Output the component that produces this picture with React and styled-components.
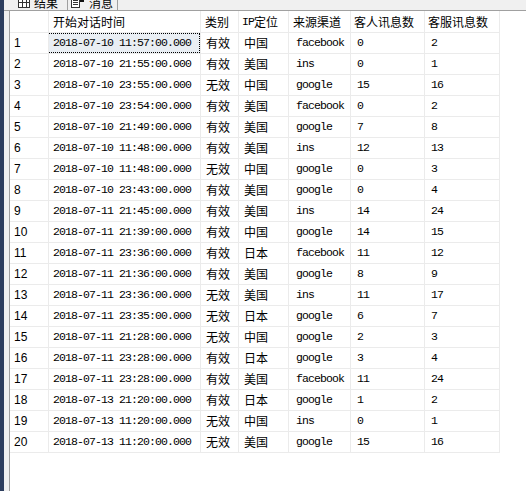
import styled, { createGlobalStyle } from "styled-components";

const GlobalStyle = createGlobalStyle`
  html, body {
    margin: 0;
    padding: 0;
    background: #ffffff;
    overflow: hidden;
  }
`;

const rows = [
  [1, "2018-07-10 11:57:00.000", "有效", "中国", "facebook", 0, 2],
  [2, "2018-07-10 21:55:00.000", "有效", "美国", "ins", 0, 1],
  [3, "2018-07-10 23:55:00.000", "无效", "中国", "google", 15, 16],
  [4, "2018-07-10 23:54:00.000", "有效", "美国", "facebook", 0, 2],
  [5, "2018-07-10 21:49:00.000", "有效", "美国", "google", 7, 8],
  [6, "2018-07-10 11:48:00.000", "有效", "美国", "ins", 12, 13],
  [7, "2018-07-10 11:48:00.000", "无效", "中国", "google", 0, 3],
  [8, "2018-07-10 23:43:00.000", "有效", "美国", "google", 0, 4],
  [9, "2018-07-11 21:45:00.000", "有效", "美国", "ins", 14, 24],
  [10, "2018-07-11 21:39:00.000", "有效", "中国", "google", 14, 15],
  [11, "2018-07-11 23:36:00.000", "有效", "日本", "facebook", 11, 12],
  [12, "2018-07-11 21:36:00.000", "有效", "美国", "google", 8, 9],
  [13, "2018-07-11 23:36:00.000", "无效", "美国", "ins", 11, 17],
  [14, "2018-07-11 23:35:00.000", "无效", "日本", "google", 6, 7],
  [15, "2018-07-11 21:28:00.000", "无效", "中国", "google", 2, 3],
  [16, "2018-07-11 23:28:00.000", "有效", "日本", "google", 3, 4],
  [17, "2018-07-11 23:28:00.000", "有效", "美国", "facebook", 11, 24],
  [18, "2018-07-13 21:20:00.000", "有效", "日本", "google", 1, 2],
  [19, "2018-07-13 11:20:00.000", "无效", "中国", "ins", 0, 1],
  [20, "2018-07-13 11:20:00.000", "无效", "美国", "google", 15, 16],
];

const Window = styled.div`
  display: flex;
  width: 526px;
  height: 491px;
`;

const SideStrip = styled.div`
  width: 4px;
  background: #2d3e5e;
`;

const Main = styled.div`
  flex: 1;
  display: flex;
  flex-direction: column;
  background: #f0f0f0;
`;

const TabBar = styled.div`
  height: 10px;
  display: flex;
  align-items: flex-end;
  overflow: hidden;
  padding-left: 9px;
  border-bottom: 1px solid #a0a0a0;
`;

const Tab = styled.div`
  height: 20px;
  flex-shrink: 0;
  display: flex;
  align-items: flex-end;
  gap: 4px;
  padding: 0 ${(p) => p.$padRight}px 0 ${(p) => p.$padLeft}px;
  border-right: 1px solid #a0a0a0;
  font-family: "Noto Sans CJK SC", sans-serif;
  font-size: 12px;
  line-height: 14px;
  color: #000;
  box-sizing: border-box;
`;

const TabIcon = styled.svg`
  display: block;
  margin-bottom: 2px;
`;

const GridArea = styled.div`
  flex: 1;
  margin-left: 5px;
  background: #ffffff;
  border-left: 1px solid #a0a0a0;
`;

const Grid = styled.div`
  display: grid;
  grid-template-columns: 39px 152px 38px 50px 62px 74px 75px;
  width: 490px;
`;

const Cell = styled.div`
  position: relative;
  box-sizing: border-box;
  height: ${(p) => (p.$head ? 22 : 21)}px;
  display: flex;
  align-items: center;
  padding-left: ${(p) => p.$pad ?? 4}px;
  border-right: 1px solid #ebebeb;
  border-bottom: 1px solid #ebebeb;
  background: ${(p) => (p.$selected ? "#e9eef3" : "#ffffff")};
  color: #000;
  white-space: nowrap;
  overflow: hidden;

  &::after {
    content: ${(p) => (p.$selected ? '""' : "none")};
    position: absolute;
    top: 0;
    left: -1px;
    right: 0;
    bottom: 0;
    border: 1px dotted #000;
  }
`;

const Cjk = styled.span`
  font-family: "Noto Sans CJK SC", sans-serif;
  font-size: 12px;
  line-height: 14px;
`;

const Mono = styled.span`
  font-family: "Liberation Mono", monospace;
  font-size: 11.5px;
  letter-spacing: -0.9px;
  line-height: 14px;
  color: #000;
`;

const RowNum = styled.span`
  font-family: "Liberation Sans", sans-serif;
  font-size: 12px;
  line-height: 14px;
`;

const GridIcon = () => (
  <TabIcon width="12" height="9" viewBox="0 0 12 9">
    <rect x="0.5" y="0.5" width="11" height="8" fill="#fff" stroke="#333" />
    <line x1="0" y1="3.5" x2="12" y2="3.5" stroke="#333" />
    <line x1="4.5" y1="0" x2="4.5" y2="9" stroke="#333" />
    <line x1="8.5" y1="0" x2="8.5" y2="9" stroke="#333" />
  </TabIcon>
);

const MessageIcon = () => (
  <TabIcon width="14" height="11" viewBox="0 0 14 11">
    <rect x="0.5" y="0.5" width="8" height="10" fill="#fff" stroke="#333" />
    <line x1="2" y1="3.5" x2="7" y2="3.5" stroke="#333" />
    <line x1="2" y1="5.5" x2="7" y2="5.5" stroke="#333" />
    <line x1="2" y1="7.5" x2="7" y2="7.5" stroke="#333" />
    <rect x="9" y="1" width="4" height="4" fill="#111" />
  </TabIcon>
);

const Row = ({ n, time, kind, place, source, guest, service }) => (
  <>
    <Cell $pad={4}>
      <RowNum>{n}</RowNum>
    </Cell>
    <Cell $selected={n === 1} $pad={4}>
      <Mono>{time}</Mono>
    </Cell>
    <Cell $pad={5}>
      <Cjk>{kind}</Cjk>
    </Cell>
    <Cell $pad={5}>
      <Cjk>{place}</Cjk>
    </Cell>
    <Cell $pad={7}>
      <Mono>{source}</Mono>
    </Cell>
    <Cell $pad={6}>
      <Mono>{guest}</Mono>
    </Cell>
    <Cell $pad={6}>
      <Mono>{service}</Mono>
    </Cell>
  </>
);

const App = () => {
  return (
    <>
      <GlobalStyle />
      <Window>
        <SideStrip />
        <Main>
          <TabBar>
            <Tab $padLeft={5} $padRight={9}>
              <GridIcon />
              <span>结果</span>
            </Tab>
            <Tab $padLeft={3} $padRight={4}>
              <MessageIcon />
              <span>消息</span>
            </Tab>
          </TabBar>
          <GridArea>
            <Grid>
              <Cell $head />
              <Cell $head>
                <Cjk>开始对话时间</Cjk>
              </Cell>
              <Cell $head>
                <Cjk>类别</Cjk>
              </Cell>
              <Cell $head $pad={3}>
                <Mono>IP</Mono>
                <Cjk>定位</Cjk>
              </Cell>
              <Cell $head>
                <Cjk>来源渠道</Cjk>
              </Cell>
              <Cell $head $pad={3}>
                <Cjk>客人讯息数</Cjk>
              </Cell>
              <Cell $head $pad={3}>
                <Cjk>客服讯息数</Cjk>
              </Cell>
              {rows.map(([n, time, kind, place, source, guest, service]) => (
                <Row
                  key={n}
                  n={n}
                  time={time}
                  kind={kind}
                  place={place}
                  source={source}
                  guest={guest}
                  service={service}
                />
              ))}
            </Grid>
          </GridArea>
        </Main>
      </Window>
    </>
  );
};

export default App;
